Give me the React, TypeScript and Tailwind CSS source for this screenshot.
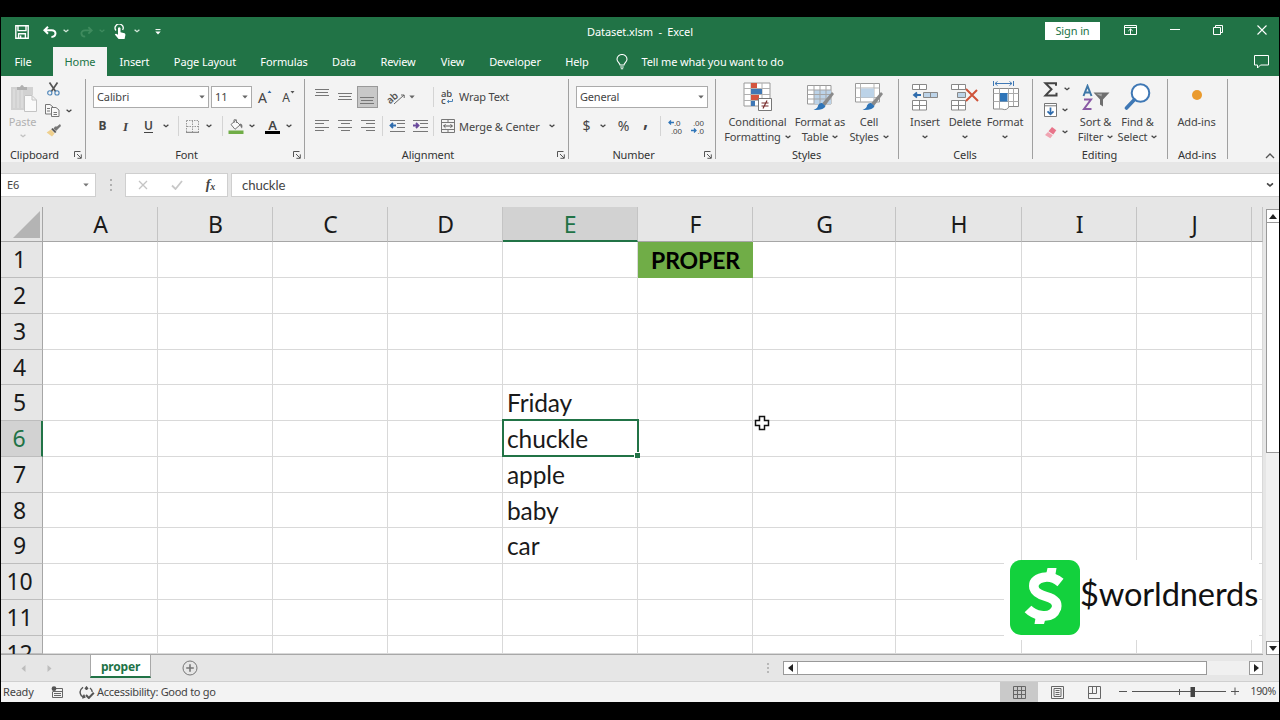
import type { ReactNode } from 'react';

const Chev = ({ c = '#444', className = '' }: { c?: string; className?: string }) => (
  <svg width="6" height="4" viewBox="0 0 6 4" className={`shrink-0 ${className}`}>
    <path d="M0.6 0.7 L3 2.7 L5.4 0.7" fill="none" stroke={c} strokeWidth="1.3" />
  </svg>
);

const Tri = ({ c = '#666' }: { c?: string }) => (
  <svg width="6" height="4" viewBox="0 0 6 4" className="shrink-0">
    <path d="M0.3 0.4 H5.7 L3 3.4Z" fill={c} />
  </svg>
);

const Launcher = () => (
  <svg width="8" height="8" viewBox="0 0 8 8" className="shrink-0">
    <path d="M0.5 6 V0.5 H6.5 M3 3 L7 7 M7.3 3.4 V7.3 H3.4" fill="none" stroke="#555" strokeWidth="1" />
  </svg>
);

const Slot = ({ className, children }: { className: string; children?: ReactNode }) => (
  <div className={`flex shrink-0 items-center justify-center whitespace-nowrap ${className}`}>{children}</div>
);

const Group = ({
  className,
  label,
  launcher = false,
  children,
}: {
  className: string;
  label: string;
  launcher?: boolean;
  children: ReactNode;
}) => (
  <div className={`flex shrink-0 ${className}`}>
    <div className="flex min-w-0 flex-1 flex-col">
      <div className="flex h-[70px] shrink-0">{children}</div>
      <div className="flex h-[18px] items-center">
        <div className={`flex-1 text-center text-[#333] ${launcher ? 'pr-[3px]' : 'pr-px'}`}>{label}</div>
        {launcher && (
          <div className="flex w-[14px] justify-center pt-px">
            <Launcher />
          </div>
        )}
      </div>
    </div>
    <div className="mt-[3px] h-[80px] w-px bg-[#a0a0a0]" />
  </div>
);

const Lines = ({ xs }: { xs: number[][] }) => (
  <svg width="15" height="14" viewBox="0 0 15 14">
    {xs.map(([y, a, b]) => (
      <path key={y} d={`M${a} ${y}.5 H${b}`} stroke="#777" strokeWidth="1" />
    ))}
  </svg>
);

const Indent = ({ left }: { left: boolean }) => (
  <svg width="17" height="14" viewBox="0 0 17 14">
    <path d="M1 1.5 H16 M8 4.5 H16 M8 8.5 H16 M1 12.5 H16" stroke="#777" />
    <path
      d={left ? 'M7 6.5 H1.5 M4 4 L1.5 6.5 L4 9' : 'M1 6.5 H6.5 M4 4 L6.5 6.5 L4 9'}
      fill="none"
      stroke={left ? '#2f6cad' : '#6a4a9c'}
      strokeWidth="1.8"
    />
  </svg>
);

const VBar = () => <div className="h-[20px] w-px shrink-0 bg-[#d4d4d4]" />;

const Big = ({ className, icon, a, b }: { className: string; icon: ReactNode; a: string; b?: string }) => (
  <div className={`flex shrink-0 flex-col items-center whitespace-nowrap pr-px ${className}`}>
    <div className="flex h-[38px] items-end justify-center pb-[3px]">{icon}</div>
    <div className="flex h-[15px] items-center">{a}</div>
    <div className="flex h-[15px] items-center gap-[4px]">
      {b !== undefined && (
        <>
          {b && <span>{b}</span>}
          <Chev />
        </>
      )}
    </div>
  </div>
);

const tabs: [string, string][] = [
  ['Insert', 'w-[55px]'],
  ['Page Layout', 'w-[86px]'],
  ['Formulas', 'w-[72px]'],
  ['Data', 'w-[48px]'],
  ['Review', 'w-[60px]'],
  ['View', 'w-[49px]'],
  ['Developer', 'w-[76px]'],
  ['Help', 'w-[48px]'],
];

const cols: [string, string][] = [
  ['A', 'w-[115px]'],
  ['B', 'w-[115px]'],
  ['C', 'w-[115px]'],
  ['D', 'w-[115px]'],
  ['E', 'w-[135px]'],
  ['F', 'w-[115px]'],
  ['G', 'w-[143px]'],
  ['H', 'w-[126px]'],
  ['I', 'w-[115px]'],
  ['J', 'w-[115px]'],
  ['', 'w-[11px]'],
];

const rows = ['h-[36px]', 'h-[36px]', 'h-[36px]', 'h-[35px]', 'h-[36px]', 'h-[36px]', 'h-[36px]', 'h-[35px]', 'h-[36px]', 'h-[36px]', 'h-[36px]', 'h-[18px]'];

const cells: Record<string, string> = { E5: 'Friday', E6: 'chuckle', E7: 'apple', E8: 'baby', E9: 'car' };

function TitleBar() {
  return (
    <div className="flex h-[30px] shrink-0 items-center">
      <Slot className="w-[42px]">
        <svg width="14" height="14" viewBox="0 0 14 14" fill="none" stroke="#fff" strokeWidth="1.4">
          <path d="M0.8 0.8 H13.2 V13.2 H0.8Z M3 1 V5.6 H11 V1 M3.6 13 V8.8 H10.4 V13 M5.6 12.8 V10.6" />
        </svg>
      </Slot>
      <Slot className="w-[14px] pb-px">
        <svg width="14" height="12" viewBox="0 0 14 12" fill="none" stroke="#fff" strokeWidth="2">
          <path d="M5 0.8 L1.4 4.3 L5 7.8 M1.6 4.3 H8.6 C14 4.3 13.6 10.8 8.4 11" />
        </svg>
      </Slot>
      <Slot className="w-[17px] pb-[2px]"><Chev c="#d5e8dc" /></Slot>
      <Slot className="w-[24px] pb-px">
        <svg width="13" height="12" viewBox="0 0 14 12" fill="none" stroke="#3f8b5e" strokeWidth="2">
          <path d="M9 0.8 L12.6 4.3 L9 7.8 M12.4 4.3 H5.4 C0 4.3 0.4 10.8 5.6 11" />
        </svg>
      </Slot>
      <Slot className="w-[8px] pb-[2px]"><Chev c="#3f8b5e" /></Slot>
      <Slot className="w-[28px] pb-px">
        <svg width="12" height="16" viewBox="0 0 12 16">
          <path d="M2 6.5 A4 4 0 1 1 8.6 6" fill="none" stroke="#fff" strokeWidth="1.3" />
          <path d="M4 4 Q5.3 2.6 6.5 4 V8.2 L10.6 9.2 Q11.6 9.6 11.4 11 L10.6 15 H4.6 L0.8 10.6 Q1.4 9.4 2.8 10 L4 10.8Z" fill="#fff" />
        </svg>
      </Slot>
      <Slot className="w-[6px] pb-[2px]"><Chev c="#d5e8dc" /></Slot>
      <Slot className="w-[36px] pb-px">
        <svg width="6" height="6" viewBox="0 0 6 6"><path d="M0.5 0.6 H5.5" stroke="#fff" /><path d="M0.3 2.4 H5.7 L3 5.6Z" fill="#fff" /></svg>
      </Slot>
      <div className="flex-1" />
      <Slot className="w-[106px] pb-[2px] text-white tracking-[-0.1px]"><span className="whitespace-pre">Dataset.xlsm  -  Excel</span></Slot>
      <div className="w-[352px]" />
      <Slot className="mt-[-2px] h-[18px] w-[55px] bg-white pb-px text-[#217346]">Sign in</Slot>
      <div className="mt-[-4px] flex">
        <Slot className="w-[61px]">
          <svg width="13" height="10" viewBox="0 0 13 10" fill="none" stroke="#fff">
            <path d="M0.5 0.5 H12.5 V9.5 H0.5Z M0.5 2.5 H12.5 M6.5 9 V4 M4.3 6 L6.5 3.9 L8.7 6" />
          </svg>
        </Slot>
        <Slot className="w-[27px]"><svg width="10" height="10"><path d="M0 4.5 H10" stroke="#fff" /></svg></Slot>
        <Slot className="w-[60px]">
          <svg width="10" height="10" viewBox="0 0 10 10" fill="none" stroke="#fff"><path d="M0.5 2.5 H7.5 V9.5 H0.5Z M2.5 2.5 V0.5 H9.5 V7.5 H7.5" /></svg>
        </Slot>
        <Slot className="w-[27px]">
          <svg width="10" height="10" viewBox="0 0 10 10"><path d="M0.5 0.5 L9.5 9.5 M9.5 0.5 L0.5 9.5" stroke="#fff" strokeWidth="1.1" /></svg>
        </Slot>
        <div className="w-[4px]" />
      </div>
    </div>
  );
}

function TabBar() {
  return (
    <div className="flex h-[29px] shrink-0 text-white">
      <Slot className="w-[44px] pb-px">File</Slot>
      <div className="w-[8px]" />
      <Slot className="w-[54px] bg-[#f3f3f3] pb-px text-[#217346]">Home</Slot>
      {tabs.map(([t, w]) => (
        <Slot key={t} className={`pb-px ${w}`}>{t}</Slot>
      ))}
      <Slot className="w-[41px]">
        <svg width="12" height="16" viewBox="0 0 12 16" fill="none" stroke="#fff" strokeWidth="1.1">
          <path d="M4 11 C4 9 1 8 1 5.2 A5 4.7 0 0 1 11 5.2 C11 8 8 9 8 11Z M4.2 13 H7.8 M4.8 14.8 H7.2" />
        </svg>
      </Slot>
      <Slot className="w-[141px] pb-px">Tell me what you want to do</Slot>
      <div className="flex-1" />
      <Slot className="w-[36px]">
        <svg width="15" height="14" viewBox="0 0 15 14" fill="none" stroke="#fff"><path d="M0.5 0.5 H14.5 V10 H6.5 L3.5 13 V10 H0.5Z" /></svg>
      </Slot>
    </div>
  );
}

const Brush = () => (
  <>
    <path d="M27 9 L29 11 L20 23 L17 20.5Z" fill="#8a8a8a" />
    <path d="M17 20 L20.5 23 Q19 27.5 8.5 27 Q13 25 13 22.5 Q14 19.5 17 20Z" fill="#2f75b8" />
  </>
);

function Ribbon() {
  return (
    <div className="flex h-[86px] shrink-0 bg-[#f3f3f3] text-[#444]">
      <Group className="w-[85px]" label="Clipboard" launcher>
        <div className="flex w-[43px] flex-col items-center">
          <div className="flex h-[37px] items-end pl-[3px]">
            <svg width="28" height="30" viewBox="0 0 28 30">
              <path d="M1 4 H23 V12 H14 V27 H1Z" fill="#d2d2d2" />
              <path d="M4 6 V25 M8 6 V25 M12 6 V25" stroke="#e4e4e4" />
              <path d="M7 7 V4 H10 Q12 0 14 4 H17 V7Z" fill="#b0b0b0" />
              <path d="M14.5 12.5 H22 L26.5 17 V28.5 H14.5Z M22 12.5 V17 H26.5" fill="#fafafa" stroke="#c4c4c4" />
            </svg>
          </div>
          <span className="flex h-[16px] items-center text-[#b1b1b1]">Paste</span>
          <div className="flex h-[13px] items-center"><Chev c="#c0c0c0" /></div>
        </div>
        <div className="flex flex-col">
          <div className="flex h-[26px] items-center">
            <Slot className="w-[18px]">
              <svg width="13" height="14" viewBox="0 0 13 14" fill="none">
                <path d="M2.5 0.5 L8.6 9.5 M10.5 0.5 L4.4 9.5" stroke="#555" strokeWidth="1.7" />
                <circle cx="2.8" cy="10.9" r="2.1" stroke="#4a83b8" strokeWidth="1.1" />
                <circle cx="10" cy="10.9" r="2.1" stroke="#4a83b8" strokeWidth="1.1" />
              </svg>
            </Slot>
          </div>
          <div className="flex h-[17px] items-center">
            <Slot className="w-[16px]">
              <svg width="15" height="13" viewBox="0 0 15 13" fill="#f8f8f8" stroke="#777">
                <path d="M0.5 0.5 H5 L8 3 V10 H0.5Z" />
                <path d="M6.5 3.5 H11 L14 6 V12.5 H6.5Z M8.5 8.5 H12 M8.5 10.5 H12 M2 4.5 H5 M2 7 H5" />
              </svg>
            </Slot>
            <Slot className="w-[18px]"><Chev /></Slot>
          </div>
          <div className="flex h-[23px] items-center">
            <Slot className="w-[18px]">
              <svg width="15" height="13" viewBox="0 0 15 13">
                <path d="M14 0 L15 2 L10 7 L7.5 4.5 L9 2.4 L11 2.6Z" fill="#777" />
                <path d="M6.5 4 L10.5 8 L9 9 L5.2 5.2Z" fill="#555" />
                <path d="M5 5.500 L8.6 9.400 L6 12.600 L0.600 8.500Z" fill="#efd08e" />
              </svg>
            </Slot>
          </div>
        </div>
      </Group>

      <Group className="w-[219px]" label="Font" launcher>
        <div className="flex flex-col pt-[10px]">
          <div className="flex h-[22px] pl-[7px]">
            <div className="flex w-[116px] items-center justify-between border border-[#ababab] bg-white px-[3px]"><span className="pb-px">Calibri</span><Tri /></div>
            <div className="ml-[2px] flex w-[41px] items-center justify-between border border-[#ababab] bg-white px-[3px]"><span className="pb-px">11</span><Tri /></div>
            <Slot className="w-[26px] items-end pt-px">
              <span className="text-[14px] leading-[20px]">A</span>
              <svg width="5" height="4" viewBox="0 0 4 4" className="mb-[14px]"><path d="M0 3 L2 0.500 L4 3Z" fill="#2f6cad" /></svg>
            </Slot>
            <Slot className="w-[21px] pt-[2px]">
              <span className="text-[12px] leading-[20px]">A</span>
              <svg width="5" height="4" viewBox="0 0 4 4" className="mb-[12px]"><path d="M0 1 L2 3.500 L4 1Z" fill="#555" /></svg>
            </Slot>
          </div>
          <div className="mt-[7px] flex h-[22px] items-center pl-[5px]">
            <Slot className="w-[23px] text-[12px] font-bold">B</Slot>
            <Slot className="w-[23px] font-['Liberation_Serif'] text-[13px] font-bold italic">I</Slot>
            <Slot className="w-[23px] text-[12px] font-semibold"><span className="border-b border-[#444] leading-[12px]">U</span></Slot>
            <Slot className="w-[12px]"><Chev /></Slot>
            <Slot className="w-[12px]"><VBar /></Slot>
            <Slot className="w-[16px]">
              <svg width="13" height="13" viewBox="0 0 13 13" fill="none" stroke="#999"><path d="M0.5 0.5 H12.5 V12 M0.5 0.5 V12 M6.5 1 V12 M1 6.5 H12" strokeDasharray="1.5 1" /><path d="M0 12.3 H13" stroke="#777" /></svg>
            </Slot>
            <Slot className="w-[18px]"><Chev /></Slot>
            <Slot className="w-[8px]"><VBar /></Slot>
            <Slot className="w-[20px]">
              <svg width="16" height="15" viewBox="0 0 16 15">
                <path d="M3 5.5 L7.5 1.5 L12 6 L7 10.3Z" fill="#fafafa" stroke="#777" />
                <path d="M6 4 V0.8 H8.4 V4" fill="none" stroke="#777" />
                <path d="M12 4.5 Q15.5 5 14 9.5 Q12.5 8 12 6Z" fill="#777" />
                <path d="M0.5 11.5 H15.5 V15 H0.5Z" fill="#70ad47" />
              </svg>
            </Slot>
            <Slot className="w-[12px]"><Chev /></Slot>
            <Slot className="w-[29px]">
              <div className="flex flex-col items-center">
                <span className="text-[13px] font-semibold leading-[12px]">A</span>
                <div className="h-[3px] w-[15px] bg-black" />
              </div>
            </Slot>
            <Slot className="w-[4px]"><Chev /></Slot>
          </div>
        </div>
      </Group>

      <Group className="w-[264px]" label="Alignment" launcher>
        <div className="flex flex-col pt-[10px] pl-[6px]">
          <div className="flex h-[22px] items-center">
            <Slot className="w-[23px] pb-[8px]"><Lines xs={[[3, 0, 14], [6, 1, 13], [9, 0, 14]]} /></Slot>
            <Slot className="w-[23px]"><Lines xs={[[3, 0, 14], [6, 1, 13], [9, 0, 14]]} /></Slot>
            <Slot className="h-[22px] w-[21px] border border-[#999] bg-[#c8c8c8] pt-[7px]"><Lines xs={[[3, 0, 14], [6, 1, 13], [9, 0, 14]]} /></Slot>
            <Slot className="w-[9px]" />
            <Slot className="w-[20px]">
              <svg width="17" height="15" viewBox="0 0 17 15" className="overflow-visible">
                <text x="-3" y="10" fontSize="10" fontWeight="600" fill="#555" transform="rotate(-42 5 7)">ab</text>
                <path d="M5 14 L15 5 M12 5 H15.2 V8" stroke="#666" fill="none" />
              </svg>
            </Slot>
            <Slot className="w-[9px]"><Tri /></Slot>
            <div className="ml-[17px] flex h-full items-center">
              <VBar />
              <Slot className="w-[25px] pl-[2px]">
                <svg width="13" height="15" viewBox="0 0 13 15" className="overflow-visible">
                  <text x="0" y="7" fontSize="9.500" fontWeight="500" fill="#444">ab</text>
                  <text x="0" y="14" fontSize="9.500" fontWeight="500" fill="#444">c</text>
                  <path d="M11.5 9 V11.5 H6.5 M8 10 L6.300 11.5 L8 13" fill="none" stroke="#4a83b8" />
                </svg>
              </Slot>
              <span className="pb-px tracking-[-0.15px]">Wrap Text</span>
            </div>
          </div>
          <div className="mt-[7px] flex h-[22px] items-center">
            <Slot className="w-[23px]"><Lines xs={[[1, 0, 14], [4, 0, 9], [8, 0, 14], [11, 0, 9]]} /></Slot>
            <Slot className="w-[23px]"><Lines xs={[[1, 0, 14], [4, 3, 12], [8, 0, 14], [11, 3, 12]]} /></Slot>
            <Slot className="w-[22px]"><Lines xs={[[1, 0, 14], [4, 5, 14], [8, 0, 14], [11, 5, 14]]} /></Slot>
            <Slot className="w-[7px]"><VBar /></Slot>
            <Slot className="w-[22px]"><Indent left /></Slot>
            <Slot className="w-[24px]"><Indent left={false} /></Slot>
            <div className="ml-[1px] flex h-full items-center">
              <VBar />
              <Slot className="w-[25px] pl-[2px]">
                <svg width="14" height="14" viewBox="0 0 14 14" fill="none" stroke="#777"><path d="M0.5 0.5 H13.5 V13.5 H0.5Z M0.5 3.5 H13.5 M0.5 10.5 H13.5 M7 0.5 V3.5 M7 10.5 V13.5" /><path d="M2.5 7 H11.5 M4.5 5.2 L2.7 7 L4.5 8.8 M9.5 5.2 L11.3 7 L9.5 8.8" stroke="#555" /></svg>
              </Slot>
              <span className="w-[90px] tracking-[-0.1px]">Merge &amp; Center</span>
              <Chev />
            </div>
          </div>
        </div>
      </Group>

      <Group className="w-[147px]" label="Number" launcher>
        <div className="flex flex-col pt-[10px] pl-[7px]">
          <div className="flex h-[22px] w-[132px] items-center justify-between border border-[#ababab] bg-white px-[3px]"><span className="pb-px tracking-[-0.2px]">General</span><Tri /></div>
          <div className="mt-[7px] flex h-[22px] items-center">
            <Slot className="w-[21px] text-[14px]">$</Slot>
            <Slot className="w-[11px]"><Chev /></Slot>
            <Slot className="w-[31px] text-[14px]">%</Slot>
            <Slot className="w-[13px] pb-[12px] text-[19px] font-semibold leading-[10px]">,</Slot>
            <Slot className="w-[17px]"><VBar /></Slot>
            <Slot className="w-[12px]">
              <svg width="14" height="15" viewBox="0 0 14 15" className="overflow-visible font-['Liberation_Sans']"><text x="6" y="6.500" fontSize="8" fill="#444">.0</text><text x="3" y="14.500" fontSize="8" fill="#444">.00</text><path d="M6 3.5 H1 M3 1.5 L1 3.5 L3 5.5" fill="none" stroke="#2f75b8" strokeWidth="1.3" /></svg>
            </Slot>
            <Slot className="w-[34px]">
              <svg width="14" height="15" viewBox="0 0 14 15" className="overflow-visible font-['Liberation_Sans']"><text x="2" y="6.500" fontSize="8" fill="#444">.00</text><text x="6.500" y="14.500" fontSize="8" fill="#444">.0</text><path d="M0 11.5 H5 M3 9.5 L5 11.5 L3 13.5" fill="none" stroke="#2f75b8" strokeWidth="1.3" /></svg>
            </Slot>
          </div>
        </div>
      </Group>

      <Group className="w-[183px]" label="Styles">
        <Big
          className="w-[84px]"
          a="Conditional"
          b="Formatting"
          icon={
            <svg width="29" height="29" viewBox="0 0 29 29">
              <path d="M1 1 H27 V24 H1Z" fill="#fff" stroke="#9a9a9a" />
              <path d="M1 6.5 H27 M1 12.5 H27 M1 18.5 H27 M8 1 V24 M19 1 V24" stroke="#b0b0b0" />
              <path d="M8 1 H14 V6 H8Z M8 13 H16 V18 H8Z" fill="#d4553f" />
              <path d="M8 7 H19 V12 H8Z M8 19 H12 V24 H8Z" fill="#3f78b5" />
              <path d="M15.5 16.5 H28.5 V28.5 H15.5Z" fill="#fff" stroke="#777" />
              <path d="M18.5 21 H25.5 M18.5 24 H25.5 M24 18.5 L20 26.5" stroke="#7a2f2f" strokeWidth="1.2" />
            </svg>
          }
        />
        <Big
          className="w-[41px]"
          a="Format as"
          b="Table"
          icon={
            <svg width="30" height="28" viewBox="0 0 30 28">
              <path d="M2.5 2.5 H26 V21 H2.5Z" fill="#fff" stroke="#999" />
              <path d="M9 7 H26 V21 H9Z" fill="#bcd3e8" />
              <path d="M2.5 7 H26 M2.5 11.5 H26 M2.5 16 H26 M9 2.5 V21 M15 2.5 V21 M21 2.5 V21" stroke="#a5a5a5" />
              <Brush />
            </svg>
          }
        />
        <Big
          className="w-[57px]"
          a="Cell"
          b="Styles"
          icon={
            <svg width="30" height="29" viewBox="0 -1 30 29">
              <path d="M1.5 0.5 H25.5 V19 H1.5Z" fill="#fff" stroke="#999" />
              <path d="M1.5 5 H25.5 M1.5 14.5 H25.5 M6.5 0.5 V19 M20 0.5 V19" stroke="#b5b5b5" />
              <path d="M7 5.5 H20 V14.5 H7Z" fill="#bcd3e8" />
              <Brush />
            </svg>
          }
        />
      </Group>

      <Group className="w-[134px]" label="Cells">
        <Big
          className="w-[53px]"
          a="Insert"
          b=""
          icon={
            <svg width="26" height="28" viewBox="0 0 26 28" fill="#fff" stroke="#888">
              <path d="M0.5 1.5 H14.5 V6.5 H0.5Z M7.5 1.5 V6.5 M0.5 17.5 H14.5 V27 H0.5Z M7.5 17.5 V27 M0.5 22.5 H14.5" />
              <path d="M11.5 9.5 H25.5 V14.5 H11.5Z M18.5 9.5 V14.5" fill="#bcd3e8" />
              <path d="M9 12 H2 M5 9.5 L2 12 L5 14.5" fill="none" stroke="#2f6cad" strokeWidth="1.8" />
            </svg>
          }
        />
        <Big
          className="w-[27px]"
          a="Delete"
          b=""
          icon={
            <svg width="28" height="28" viewBox="0 0 28 28" fill="#fff" stroke="#888">
              <path d="M0.5 1.5 H14.5 V6.5 H0.5Z M7.5 1.5 V6.5 M0.5 17.5 H14.5 V27 H0.5Z M7.5 17.5 V27 M0.5 22.5 H14.5" />
              <path d="M6.5 9.5 H14.5 V14.5 H6.5Z" fill="#bcd3e8" />
              <path d="M15 6 L27 18 M26 7 L15 18" fill="none" stroke="#cf5339" strokeWidth="2" />
            </svg>
          }
        />
        <Big
          className="w-[53px]"
          a="Format"
          b=""
          icon={
            <svg width="27" height="30" viewBox="0 0 27 30" fill="none">
              <path d="M1.5 0 V5 M21.5 0 V5 M3 2.5 H20 M5.5 0.5 L3 2.5 L5.5 4.5 M17.5 0.5 L20 2.5 L17.5 4.5" stroke="#3f78b5" />
              <path d="M1.5 7.5 H26.5 V25.5 H17 Q15 30 10 28 H1.5Z" fill="#fff" stroke="#888" />
              <path d="M1.5 12.5 H26.5 M1.5 20.5 H26.5 M7.5 7.5 V28 M16.5 7.5 V26 M21.5 7.5 V25" stroke="#aaa" />
              <path d="M8 12 H15.5 V20.5 H8Z" fill="#2f75b8" />
            </svg>
          }
        />
      </Group>

      <Group className="w-[135px]" label="Editing">
        <div className="flex w-[42px] flex-col pt-[3px]">
          <div className="flex h-[20px] items-center pl-[10px]">
            <svg width="15" height="15" viewBox="0 0 15 15"><path d="M13 3.8 V1.200 H2.500 L8.500 7.200 L2.500 13.400 H13.500 V10.800" fill="none" stroke="#444" strokeWidth="2" /></svg>
            <Chev className="ml-[6px]" />
          </div>
          <div className="flex h-[22px] items-center pl-[11px]">
            <svg width="13" height="14" viewBox="0 0 13 14" fill="none" stroke="#777"><path d="M0.5 0.5 H12.5 V13.5 H0.5Z M0.5 2.8 H12.5" fill="#fff" /><path d="M6.5 4.5 V11 M3.5 8.3 L6.5 11.3 L9.5 8.3" stroke="#2f6cad" strokeWidth="1.7" /></svg>
            <Chev className="ml-[5px]" />
          </div>
          <div className="flex h-[22px] items-center pl-[11px]">
            <svg width="13" height="13" viewBox="0 0 13 13"><path d="M8 1 L12.300 4.200 L9.300 8.600 L4.500 5.300Z" fill="#e8748a" /><path d="M4 6 L8.700 9.300 L6.300 12.300 L1 9Z" fill="#f0a4b2" /></svg>
            <Chev className="ml-[5px]" />
          </div>
        </div>
        <Big
          className="w-[42px]"
          a="Sort &"
          b="Filter"
          icon={
            <svg width="28" height="27" viewBox="0 0 28 27">
              <path d="M1.5 12 L5.5 2 L9.5 12 M3 8.5 H8" fill="none" stroke="#3f78a8" strokeWidth="2" />
              <path d="M2 15.5 H9 L2 25 H9.5" fill="none" stroke="#8a5aa5" strokeWidth="2" />
              <path d="M11.5 8.5 H27.5 L21 15.5 V22.5 L18 20.5 V15.5Z" fill="#6f6f6f" />
              <path d="M14 9.8 H20 L19.5 12.5Z" fill="#a5a5a5" />
            </svg>
          }
        />
        <Big
          className="w-[42px]"
          a="Find &"
          b="Select"
          icon={
            <svg width="27" height="28" viewBox="0 0 27 28" fill="none"><circle cx="16.5" cy="10" r="8.8" fill="#fff" stroke="#3f78b5" strokeWidth="2" /><path d="M10.3 16.8 L2.5 25" stroke="#3f78b5" strokeWidth="3.600" strokeLinecap="round" /></svg>
          }
        />
      </Group>

      <Group className="w-[60px]" label="Add-ins">
        <Big className="w-[58px]" a="Add-ins" icon={<svg width="12" height="27" viewBox="0 0 12 27"><circle cx="6" cy="11" r="5" fill="#ea9a2d" /></svg>} />
      </Group>

      <div className="flex flex-1 items-end justify-end pr-[4px] pb-[3px]">
        <svg width="10" height="6" viewBox="0 0 10 6"><path d="M1 5 L5 1 L9 5" fill="none" stroke="#555" strokeWidth="1.3" /></svg>
      </div>
    </div>
  );
}

function FormulaBar() {
  return (
    <div className="flex h-[45px] shrink-0 pt-[11px] text-[#444]">
      <div className="flex h-[24px] w-[95px] items-center justify-between border border-l-0 border-[#cfcfcf] bg-white pr-[6px] pl-[6px] text-[11px]"><span className="pb-px">E6</span><Tri c="#777" /></div>
      <Slot className="h-[24px] w-[29px]">
        <svg width="2" height="12"><path d="M0 0 H2 V2 H0Z M0 5 H2 V7 H0Z M0 10 H2 V12 H0Z" fill="#b0b0b0" /></svg>
      </Slot>
      <div className="flex h-[24px] w-[103px] items-center border border-[#cfcfcf] bg-white">
        <Slot className="w-[33px]"><svg width="10" height="10"><path d="M1 1 L9 9 M9 1 L1 9" stroke="#c4c4c4" strokeWidth="1.3" /></svg></Slot>
        <Slot className="w-[35px]"><svg width="12" height="10"><path d="M1 5.5 L4.5 9 L11 1" fill="none" stroke="#c8c8c8" strokeWidth="1.8" /></svg></Slot>
        <Slot className="w-[33px] font-['Liberation_Serif'] text-[14px] font-bold italic text-[#444]">f<span className="pt-[3px] text-[10px]">x</span></Slot>
      </div>
      <div className="ml-[3px] flex h-[24px] flex-1 items-center justify-between border border-r-0 border-[#cfcfcf] bg-white pr-[6px] pl-[10px]">
        <span className="pt-px font-['Lato'] text-[13.2px]">chuckle</span>
        <Chev className="scale-125" />
      </div>
    </div>
  );
}

function Sheet() {
  return (
    <div className="flex h-[448px] shrink-0">
      <div className="flex w-[1262px] shrink-0 flex-col border-b border-[#a8a8a8] font-['Noto_Sans']">
        <div className="flex h-[35px] shrink-0">
          <div className="flex w-[42px] shrink-0 items-end justify-end border-r border-b border-[#a6a6a6] pr-[2px] pb-[3px]">
            <svg width="27" height="27"><path d="M27 0 V27 H0Z" fill="#b4b4b4" /></svg>
          </div>
          {cols.map(([c, w]) => (
            <div
              key={c}
              className={`flex shrink-0 items-center justify-center border-r border-r-[#c4c4c4] text-[23px] leading-none ${w} ${
                c === 'E' ? 'border-b-2 border-b-[#217346] bg-[#d2d2d2] pt-px text-[#217346]' : 'border-b border-b-[#a6a6a6] pl-px text-[#1a1a1a]'
              }`}
            >
              {c}
            </div>
          ))}
        </div>
        {rows.map((h, i) => (
          <div key={i} className={`flex shrink-0 overflow-hidden ${h}`}>
            <div
              className={`flex w-[42px] shrink-0 justify-center border-b border-b-[#bdbdbd] pt-[5px] pr-[4px] text-[23px] leading-[24px] ${
                i === 5 ? 'border-r-2 border-r-[#217346] bg-[#d2d2d2] text-[#217346]' : 'border-r border-r-[#a6a6a6] text-[#1a1a1a]'
              }`}
            >
              {i + 1}
            </div>
            {cols.map(([c, w]) => {
              const id = `${c}${i + 1}`;
              if (id === 'F1')
                return (
                  <div key={c} className={`flex shrink-0 items-center justify-center bg-[#70ad47] font-['Lato'] text-[23px] font-bold text-black ${w}`}>PROPER</div>
                );
              return (
                <div key={c} className={`flex shrink-0 items-center border-r border-b border-[#d9d9d9] bg-white pt-[2px] pl-[4px] font-['Lato'] text-[24.5px] leading-none text-[#1a1a1a] ${w}`}>
                  {cells[id]}
                </div>
              );
            })}
          </div>
        ))}
      </div>
      <div className="flex flex-1 flex-col pt-[2px] pl-[3px]">
        <Slot className="h-[14px] border border-r-0 border-[#999] bg-white"><svg width="8" height="5"><path d="M4 0 L8 5 H0Z" fill="#222" /></svg></Slot>
        <div className="h-[230px] border border-t-0 border-r-0 border-[#999] bg-white" />
        <div className="flex-1 bg-[#f0f0f0]" />
        <Slot className="h-[14px] border border-r-0 border-[#999] bg-white"><svg width="8" height="5"><path d="M0 0 H8 L4 5Z" fill="#222" /></svg></Slot>
      </div>
    </div>
  );
}

function SheetTabs() {
  return (
    <div className="flex h-[26px] shrink-0">
      <Slot className="w-[44px]"><svg width="5" height="7"><path d="M4.5 0 V7 L0.5 3.5Z" fill="#bdbdbd" /></svg></Slot>
      <Slot className="w-[9px]"><svg width="5" height="7"><path d="M0.5 0 V7 L4.5 3.5Z" fill="#bdbdbd" /></svg></Slot>
      <div className="w-[36px]" />
      <Slot className="h-[23px] w-[61px] border-x border-b-2 border-x-[#a8a8a8] border-b-[#217346] bg-white pt-[2px] text-[12px] font-bold tracking-[-0.2px] text-[#217346]">proper</Slot>
      <Slot className="w-[77px]">
        <svg width="16" height="16" viewBox="0 0 16 16" fill="none" stroke="#777"><circle cx="8" cy="8" r="7" /><path d="M8 4.2 V11.8 M4.2 8 H11.8" strokeWidth="1.6" /></svg>
      </Slot>
      <div className="flex-1" />
      <Slot className="w-[29px] pr-[2px]"><svg width="2" height="10"><path d="M0 0 H2 V2 H0Z M0 4 H2 V6 H0Z M0 8 H2 V10 H0Z" fill="#b8b8b8" /></svg></Slot>
      <div className="flex w-[480px] items-center">
        <Slot className="h-[14px] w-[15px] border border-[#999] bg-white"><svg width="5" height="8"><path d="M5 0 V8 L0 4Z" fill="#222" /></svg></Slot>
        <div className="h-[14px] w-[409px] border border-l-0 border-[#999] bg-white" />
        <div className="h-[14px] flex-1 bg-[#f0f0f0]" />
        <Slot className="h-[14px] w-[14px] border border-[#999] bg-white"><svg width="5" height="8"><path d="M0 0 V8 L5 4Z" fill="#222" /></svg></Slot>
      </div>
      <div className="w-[16px]" />
    </div>
  );
}

function StatusBar() {
  return (
    <div className="flex h-[21px] shrink-0 items-center border-t border-[#cfcfcf] bg-[#f3f3f3] text-[#444]">
      <span className="w-[50px] pb-[2px] pl-[2px] tracking-[-0.2px]">Ready</span>
      <svg width="13" height="12" viewBox="0 0 13 12" fill="none" stroke="#666" className="mb-px"><path d="M5 2.5 H11.500 V11.5 H1.5 V5.5 M2 5.5 H11 M3 7.500 H10 M3 9.500 H10" /><circle cx="3" cy="2.7" r="2.4" fill="#555" stroke="none" /></svg>
      <svg width="16" height="13" viewBox="0 0 16 13" fill="none" stroke="#555" strokeWidth="1.4" className="ml-[15px]"><path d="M4 1.2 Q-1 5 2.5 10 L5.5 11 M3.2 12 L5.8 11 L4.6 8.6 M6 3 L7.5 1 L9 3 M7.5 1.5 V4 M11 2 Q13.5 4 13 6" /><path d="M7 9 L9.8 12 L14.8 6.8" strokeWidth="2" /></svg>
      <span className="ml-[2px] pb-[2px] tracking-[-0.28px]">Accessibility: Good to go</span>
      <div className="flex-1" />
      <Slot className="h-[20px] w-[38px] bg-[#c9c9c9]">
        <svg width="13" height="13" viewBox="0 0 13 13" fill="none" stroke="#666"><path d="M0.5 0.5 H12.5 V12.5 H0.5Z M0.5 4.5 H12.5 M0.5 8.5 H12.5 M4.5 0.5 V12.5 M8.5 0.5 V12.5" /></svg>
      </Slot>
      <Slot className="w-[38px]"><svg width="13" height="13" viewBox="0 0 13 13" fill="none" stroke="#666"><path d="M0.5 0.5 H12.5 V12.5 H0.5Z M3 2.5 H10 V10.5 H3Z M4.5 4.5 H8.5 M4.5 6.5 H8.5 M4.5 8.5 H8.5" /></svg></Slot>
      <Slot className="w-[37px]"><svg width="13" height="13" viewBox="0 0 13 13" fill="none" stroke="#666"><path d="M0.5 0.5 H12.5 V12.5 H0.5Z M4.5 0.5 V7.5 M8.5 0.5 V7.5 M0.5 7.5 H8.5" /></svg></Slot>
      <Slot className="w-[19px] pb-[2px]"><svg width="8" height="8"><path d="M0 4.5 H8" stroke="#555" /></svg></Slot>
      <Slot className="w-[94px]">
        <svg width="94" height="12" viewBox="0 0 94 12"><path d="M0 5.500 H94" stroke="#555" /><path d="M47.5 3 V9" stroke="#555" /><path d="M58.5 1 H63 V11 H58.5Z" fill="#444" /></svg>
      </Slot>
      <Slot className="w-[17px] pb-[2px]"><svg width="8" height="8"><path d="M0 4.5 H8 M4 0.5 V8.5" stroke="#555" /></svg></Slot>
      <span className="w-[36px] pr-[3px] pb-[2px] text-right text-[10.5px] tracking-[-0.3px]">190%</span>
    </div>
  );
}

export default function App() {
  return (
    <div className="relative h-[720px] w-[1280px] overflow-hidden bg-black pt-[17px] pr-px pl-px font-['Noto_Sans',sans-serif] text-[11px] leading-none tracking-[-0.12px]">
      <div className="flex flex-col bg-[#e6e6e6]">
        <div className="flex flex-col bg-[#217346]">
          <TitleBar />
          <TabBar />
        </div>
        <Ribbon />
        <FormulaBar />
        <Sheet />
        <SheetTabs />
        <StatusBar />
      </div>

      <div className="pointer-events-none absolute top-[419px] left-[502px] h-[38px] w-[137px] border-2 border-[#217346]">
        <div className="absolute -right-[3px] -bottom-[3px] h-[6px] w-[6px] border-t border-l border-white bg-[#217346]" />
      </div>

      <svg width="16" height="16" viewBox="0 0 16 16" className="absolute top-[415px] left-[754px]">
        <path d="M5.5 1.5 H10.5 V5.5 H14.5 V10.5 H10.5 V14.5 H5.5 V10.5 H1.5 V5.5 H5.5Z" fill="#fff" stroke="#111" strokeWidth="1.5" />
      </svg>

      <div className="absolute top-[560px] left-[1004px] flex h-[80px] w-[255px] bg-white pl-[6px]">
        <svg width="70" height="75" viewBox="0 0 70 75" className="shrink-0">
          <rect width="70" height="75" rx="11" fill="#13d13d" />
          <path d="M50.500 22.500 Q42 15.500 33 17.500 Q22.500 20 24 28 Q25.500 33.500 36 36.500 Q48.500 40 46.500 48 Q43 57.500 31 55.500 Q23 54 18 49" fill="none" stroke="#fff" strokeWidth="9.500" />
          <path d="M37.500 8 H46.500 L45 17 H35.500Z M26 55 H36.500 L34 64 H24.500Z" fill="#fff" />
        </svg>
        <span className="pt-[16px] font-['Lato'] text-[32.6px] leading-[36px] text-[#111]">$worldnerds</span>
      </div>
    </div>
  );
}
